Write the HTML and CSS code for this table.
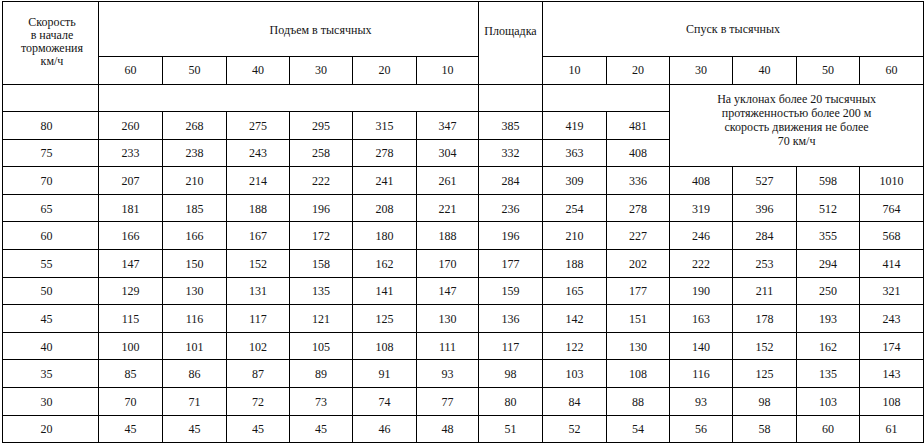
FILE: index.html
```html
<!DOCTYPE html>
<html lang="ru">
<head>
<meta charset="utf-8">
<title>Тормозной путь</title>
<link rel="stylesheet" href="styles.css">
</head>
<body>
<table class="brake">
  <colgroup>
    <col class="c0"><col class="c64"><col class="c64"><col class="c63"><col class="c63"><col class="c64"><col class="c62">
    <col class="c64">
    <col class="c64"><col class="c63"><col class="c63"><col class="c64"><col class="c63"><col class="c64">
  </colgroup>
  <tr class="r-head">
    <th rowspan="2" class="speed">Скорость<br>в начале<br>торможения<br>км/ч</th>
    <th colspan="6" class="up">Подъем в тысячных</th>
    <th rowspan="2" class="flat">Площадка</th>
    <th colspan="6">Спуск в тысячных</th>
  </tr>
  <tr class="r-sub">
    <th>60</th><th>50</th><th>40</th><th>30</th><th>20</th><th>10</th>
    <th>10</th><th>20</th><th>30</th><th>40</th><th>50</th><th>60</th>
  </tr>
  <tr class="r-blank">
    <td></td><td colspan="6"></td><td></td><td colspan="2"></td>
    <td colspan="4" rowspan="3" class="note">На уклонах более 20 тысячных<br>протяженностью более 200 м<br>скорость движения не более<br>70 км/ч</td>
  </tr>
  <tr class="r"><td class="v">80</td><td>260</td><td>268</td><td>275</td><td>295</td><td>315</td><td>347</td><td>385</td><td>419</td><td>481</td></tr>
  <tr class="r"><td class="v">75</td><td>233</td><td>238</td><td>243</td><td>258</td><td>278</td><td>304</td><td>332</td><td>363</td><td>408</td></tr>
  <tr class="r"><td class="v">70</td><td>207</td><td>210</td><td>214</td><td>222</td><td>241</td><td>261</td><td>284</td><td>309</td><td>336</td><td>408</td><td>527</td><td>598</td><td>1010</td></tr>
  <tr class="r"><td class="v">65</td><td>181</td><td>185</td><td>188</td><td>196</td><td>208</td><td>221</td><td>236</td><td>254</td><td>278</td><td>319</td><td>396</td><td>512</td><td>764</td></tr>
  <tr class="r"><td class="v">60</td><td>166</td><td>166</td><td>167</td><td>172</td><td>180</td><td>188</td><td>196</td><td>210</td><td>227</td><td>246</td><td>284</td><td>355</td><td>568</td></tr>
  <tr class="r"><td class="v">55</td><td>147</td><td>150</td><td>152</td><td>158</td><td>162</td><td>170</td><td>177</td><td>188</td><td>202</td><td>222</td><td>253</td><td>294</td><td>414</td></tr>
  <tr class="r"><td class="v">50</td><td>129</td><td>130</td><td>131</td><td>135</td><td>141</td><td>147</td><td>159</td><td>165</td><td>177</td><td>190</td><td>211</td><td>250</td><td>321</td></tr>
  <tr class="r"><td class="v">45</td><td>115</td><td>116</td><td>117</td><td>121</td><td>125</td><td>130</td><td>136</td><td>142</td><td>151</td><td>163</td><td>178</td><td>193</td><td>243</td></tr>
  <tr class="r"><td class="v">40</td><td>100</td><td>101</td><td>102</td><td>105</td><td>108</td><td>111</td><td>117</td><td>122</td><td>130</td><td>140</td><td>152</td><td>162</td><td>174</td></tr>
  <tr class="r"><td class="v">35</td><td>85</td><td>86</td><td>87</td><td>89</td><td>91</td><td>93</td><td>98</td><td>103</td><td>108</td><td>116</td><td>125</td><td>135</td><td>143</td></tr>
  <tr class="r"><td class="v">30</td><td>70</td><td>71</td><td>72</td><td>73</td><td>74</td><td>77</td><td>80</td><td>84</td><td>88</td><td>93</td><td>98</td><td>103</td><td>108</td></tr>
  <tr class="r"><td class="v">20</td><td>45</td><td>45</td><td>45</td><td>45</td><td>46</td><td>48</td><td>51</td><td>52</td><td>54</td><td>56</td><td>58</td><td>60</td><td>61</td></tr>
</table>
</body>
</html>
```

FILE: styles.css
```css
html, body {
  margin: 0;
  padding: 0;
  background: #ffffff;
}

body {
  padding: 1px 0 0 2px;
  font-family: "Liberation Serif", "Times New Roman", serif;
  font-size: 12px;
  line-height: 13px;
  color: #141414;
}

.brake {
  border-collapse: collapse;
  table-layout: fixed;
  width: 922px;
}

.c0 { width: 96px; }
.c64 { width: 64px; }
.c63 { width: 63px; }
.c62 { width: 62px; }

.brake th,
.brake td {
  border: 1px solid #000;
  padding: 0;
  text-align: center;
  vertical-align: middle;
  font-weight: normal;
}

.r-head { height: 55px; }
.r-sub { height: 28px; }
.r-blank { height: 27px; }
.r { height: 27.6px; }

.brake .speed {
  padding-left: 3px;
  padding-bottom: 2px;
}

.brake .up {
  padding-left: 64px;
  padding-top: 3px;
}

.brake .flat {
  vertical-align: top;
  padding-top: 23px;
}

.brake .note {
  line-height: 14px;
  padding-bottom: 12px;
}

.brake .r td { padding-top: 2px; }
.brake .r .v { padding-right: 8px; }
```
